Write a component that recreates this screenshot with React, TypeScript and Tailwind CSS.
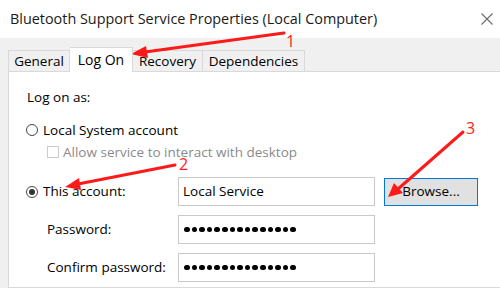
import React from "react";

const font = { fontFamily: '"Open Sans", "Noto Sans", sans-serif' };

function Radio({ checked }: { checked?: boolean }) {
  return (
    <span className="w-[12px] h-[12px] rounded-full border border-[#444444] bg-white flex items-center justify-center shrink-0">
      {checked && <span className="w-[6px] h-[6px] rounded-full bg-[#333333]" />}
    </span>
  );
}

function Field({ children }: { children: React.ReactNode }) {
  return (
    <div className="w-[197px] h-[29px] border border-[#c9c9c9] bg-white flex items-center pl-[4px] text-[13.5px] text-black">
      {children}
    </div>
  );
}

function Dots() {
  return (
    <div className="flex items-center gap-[2px] ml-[1px]">
      {Array.from({ length: 15 }).map((_, i) => (
        <span key={i} className="w-[5.6px] h-[5.6px] rounded-full bg-black" />
      ))}
    </div>
  );
}

export default function App() {
  return (
    <div className="relative w-[500px] h-[288px] overflow-hidden bg-[#f0f0f0] flex flex-col text-black whitespace-nowrap" style={font}>
      <div className="h-[38px] bg-white flex items-center justify-between pl-[10px] pr-[4px] shrink-0">
        <span className="text-[14.4px] text-[#1a1a1a]">Bluetooth Support Service Properties (Local Computer)</span>
        <svg width="14" height="14" viewBox="0 0 14 14" className="mr-[2px]">
          <path d="M1.5 1.5 L12.5 12.5 M12.5 1.5 L1.5 12.5" stroke="#6b6b6b" strokeWidth="1.1" fill="none" />
        </svg>
      </div>
      <div className="h-[33px] flex items-end pl-[8px] shrink-0 text-[13.5px]">
        <div className="h-[21px] w-[62px] border border-b-0 border-[#d9d9d9] bg-[#f0f0f0] flex items-center justify-center">General</div>
        <div className="h-[25px] w-[63px] border border-b-0 border-l-0 border-[#d9d9d9] bg-white flex items-center justify-center -mb-px relative z-10 pb-[2px] text-[14px]">Log On</div>
        <div className="h-[21px] w-[70px] border border-b-0 border-l-0 border-[#d9d9d9] bg-[#f0f0f0] flex items-center justify-center">Recovery</div>
        <div className="h-[21px] w-[102px] border border-b-0 border-l-0 border-[#d9d9d9] bg-[#f0f0f0] flex items-center justify-center">Dependencies</div>
      </div>
      <div className="flex-1 ml-[8px] -mr-[10px] bg-white border border-[#d9d9d9] flex flex-col text-[13.5px]">
        <div className="h-[22px] mt-[14px] ml-[18px] flex items-center">Log on as:</div>
        <div className="h-[22px] mt-[11px] ml-[17px] flex items-center gap-[5px]">
          <Radio />
          <span>Local System account</span>
        </div>
        <div className="h-[22px] ml-[38px] flex items-center gap-[4px]">
          <span className="w-[12px] h-[12px] border border-[#cccccc] bg-white shrink-0" />
          <span className="text-[#8a8a8a]">Allow service to interact with desktop</span>
        </div>
        <div className="h-[29px] mt-[14px] ml-[17px] flex items-center">
          <div className="w-[152px] flex items-center gap-[5px]">
            <Radio checked />
            <span>This account:</span>
          </div>
          <Field>Local Service</Field>
          <button className="ml-[9px] w-[94px] h-[28px] border border-[#0078d7] bg-[#e1e1e1] flex items-center justify-center">Browse...</button>
        </div>
        <div className="h-[29px] mt-[9px] ml-[38px] flex items-center">
          <span className="w-[131px]">Password:</span>
          <Field><Dots /></Field>
        </div>
        <div className="h-[29px] mt-[9px] ml-[38px] flex items-center">
          <span className="w-[131px]">Confirm password:</span>
          <Field><Dots /></Field>
        </div>
      </div>
      <svg className="absolute inset-0 pointer-events-none" width="500" height="288" viewBox="0 0 500 288">
        <g stroke="#ff1a1a" strokeWidth="3" strokeLinecap="round" fill="none">
          <line x1="284" y1="33" x2="145" y2="52" />
          <line x1="175" y1="165" x2="78" y2="184" />
          <line x1="463" y1="132" x2="398" y2="189" />
        </g>
        <g fill="#ff1a1a">
          <polygon points="131,54 146,46 148,58" />
          <polygon points="65,187 79,178 81,190" />
          <polygon points="388,197 394,183 403,193" />
        </g>
        <g fill="#ff1a1a" fontSize="16" style={{ fontFamily: '"Open Sans", sans-serif' }}>
          <text x="286" y="47">1</text>
          <text x="179" y="170">2</text>
          <text x="466" y="134">3</text>
        </g>
      </svg>
    </div>
  );
}
